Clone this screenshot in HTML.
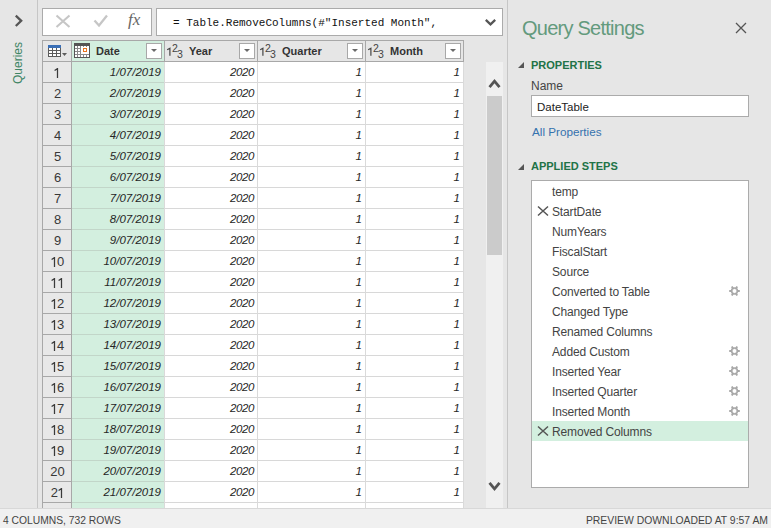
<!DOCTYPE html>
<html><head><meta charset="utf-8">
<style>
*{margin:0;padding:0;box-sizing:border-box}
html,body{width:771px;height:528px;overflow:hidden;background:#e6e6e6;font-family:"Liberation Sans",sans-serif;color:#333}
.abs{position:absolute}
#lstrip{position:absolute;left:37px;top:0;width:1px;height:508px;background:#c6c6c6}
#queries{position:absolute;left:-3px;top:55px;width:42px;height:16px;transform:rotate(-90deg);transform-origin:center;color:#3f8565;font-size:12px;line-height:16px;text-align:center}
#fbtn{position:absolute;left:42px;top:8px;width:110px;height:28px;background:#fff;border:1px solid #ababab}
#fbox{position:absolute;left:156px;top:8px;width:347px;height:28px;background:#fff;border:1px solid #ababab}
#ftext{position:absolute;left:173px;top:15px;font-family:"Liberation Mono",monospace;font-size:11px;line-height:16px;color:#111;white-space:pre}
#grid{position:absolute;left:42px;top:40px;width:422px;height:468px;overflow:hidden}
.hl{position:absolute;left:0;width:422px;height:1px;background:#d8d8d8}
.hlr{position:absolute;left:0;width:30px;height:1px;background:#a8a8a8}
.hlg{position:absolute;left:30px;width:92px;height:1px;background:#c2d6c9}
.c,.rn{position:absolute;height:21px;line-height:23px;font-size:11.5px;font-style:italic;color:#262626;text-align:right;padding-right:3px}
.rn{left:1px;width:29px;text-align:center;font-style:normal;padding:0;background:#e8e8e8;color:#383838;font-size:13px;text-indent:0}
.dt{left:30px;width:92px;background:#d3efdf}
.yr{left:123px;width:92px;letter-spacing:-0.4px}
.qt{left:216px;width:107px}
.mo{left:324px;width:97px}
.vl{position:absolute;top:0;width:1px;height:468px;background:#dadada}
#dataBg{position:absolute;left:0;top:21px;width:422px;height:447px;background:#fff}
.hdr{position:absolute;top:0;height:21px;background:#e6e6e6;font-weight:bold;font-size:11px;line-height:23px;color:#333}
.dd{position:absolute;top:3px;width:16px;height:16px;background:#fff;border:1px solid #a8a8a8}
.dd:after{content:"";position:absolute;left:4px;top:5px;border-left:3px solid transparent;border-right:3px solid transparent;border-top:3px solid #6a6a6a}
.d1,.d2,.d3{position:absolute;font-size:10.5px;font-weight:normal;color:#444;line-height:10px;-webkit-text-stroke:0}
.d1{left:2px;top:7px;font-size:10.5px}
.d2{left:7px;top:3px}
.d3{left:12px;top:9px}
#sb{position:absolute;left:486px;top:62px;width:17px;height:446px;background:#f0f0f0}
#thumb{position:absolute;left:487px;top:96px;width:15px;height:159px;background:#cbcbcb}
#rdiv{position:absolute;left:507px;top:0;width:1px;height:508px;background:#c6c6c6}
#qs{position:absolute;left:522px;top:15px;font-size:20px;line-height:26px;color:#639a7d;letter-spacing:-0.75px}
.sec{position:absolute;left:531px;font-size:11px;font-weight:bold;color:#217346;line-height:14px}
.tri{position:absolute;width:0;height:0;border-left:6px solid transparent;border-bottom:6px solid #555}
#namel{position:absolute;left:531px;top:79px;font-size:12px;line-height:14px;color:#444}
#namein{position:absolute;left:531px;top:95px;width:218px;height:22px;background:#fff;border:1px solid #ababab}
#nametxt{position:absolute;left:537px;top:100px;font-size:11.5px;line-height:14px;color:#222}
#allp{position:absolute;left:532px;top:125px;font-size:11.7px;line-height:14px;color:#3572ae}
#steps{position:absolute;left:531px;top:180px;width:218px;height:308px;background:#fff;border:1px solid #ababab}
.step{position:absolute;left:532px;width:216px;height:20px;font-size:12px;line-height:22px;color:#444;letter-spacing:-0.15px}
.step.sel{background:#d3efdf}
.sn{position:absolute;left:20px;top:0}
.sx{position:absolute;left:5px;top:4px}
.gear{position:absolute;left:196px;top:4px}
#status{position:absolute;left:0;top:508px;width:771px;height:20px;background:#f0f0f0;border-top:1px solid #d8d8d8}
#st1{position:absolute;left:3px;top:514px;font-size:10.3px;line-height:14px;color:#444}
#st2{position:absolute;right:3px;top:514px;font-size:10.4px;line-height:14px;color:#444}
</style></head><body>
<div id="lstrip"></div>
<svg class="abs" style="left:14px;top:14px" width="10" height="14" viewBox="0 0 10 14"><path d="M1.8 1.6L7.2 6.8L1.8 12" fill="none" stroke="#555" stroke-width="2.3"/></svg>
<div id="queries">Queries</div>

<div id="fbtn"></div>
<svg class="abs" style="left:55px;top:14px" width="16" height="14" viewBox="0 0 16 14"><path d="M1.5 1.5L14.5 13M14.5 1.5L1.5 13" stroke="#c6c6c6" stroke-width="2.1"/></svg>
<svg class="abs" style="left:93px;top:14px" width="16" height="14" viewBox="0 0 16 14"><path d="M1.5 6.5L6 11.5L14 1.5" fill="none" stroke="#c6c6c6" stroke-width="2.3"/></svg>
<div class="abs" style="left:128px;top:8px;font-family:'Liberation Serif',serif;font-style:italic;font-size:17px;line-height:24px;color:#666">fx</div>
<div id="fbox"></div>
<div id="ftext">= Table.RemoveColumns(#"Inserted Month",</div>
<svg class="abs" style="left:484px;top:18px" width="13" height="9" viewBox="0 0 13 9"><path d="M1.8 1.8L6.5 6.3L11.2 1.8" fill="none" stroke="#555" stroke-width="2.3"/></svg>

<div id="grid">
<div id="dataBg"></div>
<div class="hdr" style="left:1px;width:29px"></div><svg class="abs" style="left:6px;top:5px" width="20" height="12" viewBox="0 0 20 12"><rect x="0" y="0" width="13" height="12" fill="#5c5c5c"/><rect x="0" y="0" width="13" height="3" fill="#3b6fb6"/>
<g fill="#fff"><rect x="1" y="3" width="3" height="2"/><rect x="5" y="3" width="3" height="2"/><rect x="9" y="3" width="3" height="2"/><rect x="1" y="6" width="3" height="2"/><rect x="5" y="6" width="3" height="2"/><rect x="9" y="6" width="3" height="2"/><rect x="1" y="9" width="3" height="2"/><rect x="5" y="9" width="3" height="2"/><rect x="9" y="9" width="3" height="2"/></g>
<path d="M14 8H19L16.5 11Z" fill="#5c5c5c"/></svg>
<div class="hdr" style="left:30px;width:92px;background:#d3efdf"><svg class="abs" style="left:2px;top:3px" width="16" height="15" viewBox="0 0 16 15"><rect x="0" y="0" width="16" height="15" fill="#555"/><rect x="1" y="3" width="14" height="11" fill="#8a8a8a"/>
<g fill="#fff"><rect x="1" y="3" width="2" height="2"/><rect x="4" y="3" width="2" height="2"/><rect x="7" y="3" width="2" height="2"/><rect x="10" y="3" width="2" height="2"/><rect x="13" y="3" width="2" height="2"/>
<rect x="1" y="6" width="2" height="2"/><rect x="4" y="6" width="2" height="2"/><rect x="13" y="6" width="2" height="2"/>
<rect x="1" y="9" width="2" height="2"/><rect x="4" y="9" width="2" height="2"/><rect x="7" y="9" width="2" height="2"/><rect x="10" y="9" width="2" height="2"/><rect x="13" y="9" width="2" height="2"/>
<rect x="1" y="12" width="2" height="2"/><rect x="4" y="12" width="2" height="2"/><rect x="7" y="12" width="2" height="2"/><rect x="10" y="12" width="2" height="2"/><rect x="13" y="12" width="2" height="2"/>
<rect x="7" y="4" width="8" height="7"/></g><rect x="9" y="5" width="4" height="4" fill="#e8731e"/><rect x="10" y="6" width="2" height="2" fill="#fff"/></svg><span style="position:absolute;left:24px">Date</span><div class="dd" style="left:74px"></div></div>
<div class="hdr" style="left:123px;width:92px"><svg class="abs" style="left:0;top:0" width="8" height="21"><path d="M2.2 9.8L4.9 8.2V15.8" fill="none" stroke="#444" stroke-width="1.2"/></svg><span class="d2">2</span><span class="d3">3</span><span style="position:absolute;left:24px">Year</span><div class="dd" style="left:74px"></div></div>
<div class="hdr" style="left:216px;width:107px"><svg class="abs" style="left:0;top:0" width="8" height="21"><path d="M2.2 9.8L4.9 8.2V15.8" fill="none" stroke="#444" stroke-width="1.2"/></svg><span class="d2">2</span><span class="d3">3</span><span style="position:absolute;left:24px">Quarter</span><div class="dd" style="left:89px"></div></div>
<div class="hdr" style="left:324px;width:97px"><svg class="abs" style="left:0;top:0" width="8" height="21"><path d="M2.2 9.8L4.9 8.2V15.8" fill="none" stroke="#444" stroke-width="1.2"/></svg><span class="d2">2</span><span class="d3">3</span><span style="position:absolute;left:24px">Month</span><div class="dd" style="left:79px"></div></div>
<div class="rn" style="top:21px"><svg width="6.4" height="10" viewBox="0 0 6.4 10" style="vertical-align:-1px"><path d="M0.6 2.5L3.5 0.6V10" fill="none" stroke="#3a3a3a" stroke-width="1.25"/></svg></div>
<div class="c dt" style="top:21px">1/07/2019</div>
<div class="c yr" style="top:21px">2020</div>
<div class="c qt" style="top:21px">1</div>
<div class="c mo" style="top:21px">1</div>
<div class="rn" style="top:42px">2</div>
<div class="c dt" style="top:42px">2/07/2019</div>
<div class="c yr" style="top:42px">2020</div>
<div class="c qt" style="top:42px">1</div>
<div class="c mo" style="top:42px">1</div>
<div class="rn" style="top:63px">3</div>
<div class="c dt" style="top:63px">3/07/2019</div>
<div class="c yr" style="top:63px">2020</div>
<div class="c qt" style="top:63px">1</div>
<div class="c mo" style="top:63px">1</div>
<div class="rn" style="top:84px">4</div>
<div class="c dt" style="top:84px">4/07/2019</div>
<div class="c yr" style="top:84px">2020</div>
<div class="c qt" style="top:84px">1</div>
<div class="c mo" style="top:84px">1</div>
<div class="rn" style="top:105px">5</div>
<div class="c dt" style="top:105px">5/07/2019</div>
<div class="c yr" style="top:105px">2020</div>
<div class="c qt" style="top:105px">1</div>
<div class="c mo" style="top:105px">1</div>
<div class="rn" style="top:126px">6</div>
<div class="c dt" style="top:126px">6/07/2019</div>
<div class="c yr" style="top:126px">2020</div>
<div class="c qt" style="top:126px">1</div>
<div class="c mo" style="top:126px">1</div>
<div class="rn" style="top:147px">7</div>
<div class="c dt" style="top:147px">7/07/2019</div>
<div class="c yr" style="top:147px">2020</div>
<div class="c qt" style="top:147px">1</div>
<div class="c mo" style="top:147px">1</div>
<div class="rn" style="top:168px">8</div>
<div class="c dt" style="top:168px">8/07/2019</div>
<div class="c yr" style="top:168px">2020</div>
<div class="c qt" style="top:168px">1</div>
<div class="c mo" style="top:168px">1</div>
<div class="rn" style="top:189px">9</div>
<div class="c dt" style="top:189px">9/07/2019</div>
<div class="c yr" style="top:189px">2020</div>
<div class="c qt" style="top:189px">1</div>
<div class="c mo" style="top:189px">1</div>
<div class="rn" style="top:210px"><svg width="6.4" height="10" viewBox="0 0 6.4 10" style="vertical-align:-1px"><path d="M0.6 2.5L3.5 0.6V10" fill="none" stroke="#3a3a3a" stroke-width="1.25"/></svg>0</div>
<div class="c dt" style="top:210px">10/07/2019</div>
<div class="c yr" style="top:210px">2020</div>
<div class="c qt" style="top:210px">1</div>
<div class="c mo" style="top:210px">1</div>
<div class="rn" style="top:231px"><svg width="6.4" height="10" viewBox="0 0 6.4 10" style="vertical-align:-1px"><path d="M0.6 2.5L3.5 0.6V10" fill="none" stroke="#3a3a3a" stroke-width="1.25"/></svg><svg width="6.4" height="10" viewBox="0 0 6.4 10" style="vertical-align:-1px"><path d="M0.6 2.5L3.5 0.6V10" fill="none" stroke="#3a3a3a" stroke-width="1.25"/></svg></div>
<div class="c dt" style="top:231px">11/07/2019</div>
<div class="c yr" style="top:231px">2020</div>
<div class="c qt" style="top:231px">1</div>
<div class="c mo" style="top:231px">1</div>
<div class="rn" style="top:252px"><svg width="6.4" height="10" viewBox="0 0 6.4 10" style="vertical-align:-1px"><path d="M0.6 2.5L3.5 0.6V10" fill="none" stroke="#3a3a3a" stroke-width="1.25"/></svg>2</div>
<div class="c dt" style="top:252px">12/07/2019</div>
<div class="c yr" style="top:252px">2020</div>
<div class="c qt" style="top:252px">1</div>
<div class="c mo" style="top:252px">1</div>
<div class="rn" style="top:273px"><svg width="6.4" height="10" viewBox="0 0 6.4 10" style="vertical-align:-1px"><path d="M0.6 2.5L3.5 0.6V10" fill="none" stroke="#3a3a3a" stroke-width="1.25"/></svg>3</div>
<div class="c dt" style="top:273px">13/07/2019</div>
<div class="c yr" style="top:273px">2020</div>
<div class="c qt" style="top:273px">1</div>
<div class="c mo" style="top:273px">1</div>
<div class="rn" style="top:294px"><svg width="6.4" height="10" viewBox="0 0 6.4 10" style="vertical-align:-1px"><path d="M0.6 2.5L3.5 0.6V10" fill="none" stroke="#3a3a3a" stroke-width="1.25"/></svg>4</div>
<div class="c dt" style="top:294px">14/07/2019</div>
<div class="c yr" style="top:294px">2020</div>
<div class="c qt" style="top:294px">1</div>
<div class="c mo" style="top:294px">1</div>
<div class="rn" style="top:315px"><svg width="6.4" height="10" viewBox="0 0 6.4 10" style="vertical-align:-1px"><path d="M0.6 2.5L3.5 0.6V10" fill="none" stroke="#3a3a3a" stroke-width="1.25"/></svg>5</div>
<div class="c dt" style="top:315px">15/07/2019</div>
<div class="c yr" style="top:315px">2020</div>
<div class="c qt" style="top:315px">1</div>
<div class="c mo" style="top:315px">1</div>
<div class="rn" style="top:336px"><svg width="6.4" height="10" viewBox="0 0 6.4 10" style="vertical-align:-1px"><path d="M0.6 2.5L3.5 0.6V10" fill="none" stroke="#3a3a3a" stroke-width="1.25"/></svg>6</div>
<div class="c dt" style="top:336px">16/07/2019</div>
<div class="c yr" style="top:336px">2020</div>
<div class="c qt" style="top:336px">1</div>
<div class="c mo" style="top:336px">1</div>
<div class="rn" style="top:357px"><svg width="6.4" height="10" viewBox="0 0 6.4 10" style="vertical-align:-1px"><path d="M0.6 2.5L3.5 0.6V10" fill="none" stroke="#3a3a3a" stroke-width="1.25"/></svg>7</div>
<div class="c dt" style="top:357px">17/07/2019</div>
<div class="c yr" style="top:357px">2020</div>
<div class="c qt" style="top:357px">1</div>
<div class="c mo" style="top:357px">1</div>
<div class="rn" style="top:378px"><svg width="6.4" height="10" viewBox="0 0 6.4 10" style="vertical-align:-1px"><path d="M0.6 2.5L3.5 0.6V10" fill="none" stroke="#3a3a3a" stroke-width="1.25"/></svg>8</div>
<div class="c dt" style="top:378px">18/07/2019</div>
<div class="c yr" style="top:378px">2020</div>
<div class="c qt" style="top:378px">1</div>
<div class="c mo" style="top:378px">1</div>
<div class="rn" style="top:399px"><svg width="6.4" height="10" viewBox="0 0 6.4 10" style="vertical-align:-1px"><path d="M0.6 2.5L3.5 0.6V10" fill="none" stroke="#3a3a3a" stroke-width="1.25"/></svg>9</div>
<div class="c dt" style="top:399px">19/07/2019</div>
<div class="c yr" style="top:399px">2020</div>
<div class="c qt" style="top:399px">1</div>
<div class="c mo" style="top:399px">1</div>
<div class="rn" style="top:420px">20</div>
<div class="c dt" style="top:420px">20/07/2019</div>
<div class="c yr" style="top:420px">2020</div>
<div class="c qt" style="top:420px">1</div>
<div class="c mo" style="top:420px">1</div>
<div class="rn" style="top:441px">2<svg width="6.4" height="10" viewBox="0 0 6.4 10" style="vertical-align:-1px"><path d="M0.6 2.5L3.5 0.6V10" fill="none" stroke="#3a3a3a" stroke-width="1.25"/></svg></div>
<div class="c dt" style="top:441px">21/07/2019</div>
<div class="c yr" style="top:441px">2020</div>
<div class="c qt" style="top:441px">1</div>
<div class="c mo" style="top:441px">1</div>
<div class="rn" style="top:462px">22</div>
<div class="c dt" style="top:462px">22/07/2019</div>
<div class="c yr" style="top:462px">2020</div>
<div class="c qt" style="top:462px">1</div>
<div class="c mo" style="top:462px">1</div>
<div class="hl" style="top:0px"></div><div class="hlr" style="top:0px"></div><div class="hlg" style="top:0px"></div>
<div class="hl" style="top:21px"></div><div class="hlr" style="top:21px"></div><div class="hlg" style="top:21px"></div>
<div class="hl" style="top:42px"></div><div class="hlr" style="top:42px"></div><div class="hlg" style="top:42px"></div>
<div class="hl" style="top:63px"></div><div class="hlr" style="top:63px"></div><div class="hlg" style="top:63px"></div>
<div class="hl" style="top:84px"></div><div class="hlr" style="top:84px"></div><div class="hlg" style="top:84px"></div>
<div class="hl" style="top:105px"></div><div class="hlr" style="top:105px"></div><div class="hlg" style="top:105px"></div>
<div class="hl" style="top:126px"></div><div class="hlr" style="top:126px"></div><div class="hlg" style="top:126px"></div>
<div class="hl" style="top:147px"></div><div class="hlr" style="top:147px"></div><div class="hlg" style="top:147px"></div>
<div class="hl" style="top:168px"></div><div class="hlr" style="top:168px"></div><div class="hlg" style="top:168px"></div>
<div class="hl" style="top:189px"></div><div class="hlr" style="top:189px"></div><div class="hlg" style="top:189px"></div>
<div class="hl" style="top:210px"></div><div class="hlr" style="top:210px"></div><div class="hlg" style="top:210px"></div>
<div class="hl" style="top:231px"></div><div class="hlr" style="top:231px"></div><div class="hlg" style="top:231px"></div>
<div class="hl" style="top:252px"></div><div class="hlr" style="top:252px"></div><div class="hlg" style="top:252px"></div>
<div class="hl" style="top:273px"></div><div class="hlr" style="top:273px"></div><div class="hlg" style="top:273px"></div>
<div class="hl" style="top:294px"></div><div class="hlr" style="top:294px"></div><div class="hlg" style="top:294px"></div>
<div class="hl" style="top:315px"></div><div class="hlr" style="top:315px"></div><div class="hlg" style="top:315px"></div>
<div class="hl" style="top:336px"></div><div class="hlr" style="top:336px"></div><div class="hlg" style="top:336px"></div>
<div class="hl" style="top:357px"></div><div class="hlr" style="top:357px"></div><div class="hlg" style="top:357px"></div>
<div class="hl" style="top:378px"></div><div class="hlr" style="top:378px"></div><div class="hlg" style="top:378px"></div>
<div class="hl" style="top:399px"></div><div class="hlr" style="top:399px"></div><div class="hlg" style="top:399px"></div>
<div class="hl" style="top:420px"></div><div class="hlr" style="top:420px"></div><div class="hlg" style="top:420px"></div>
<div class="hl" style="top:441px"></div><div class="hlr" style="top:441px"></div><div class="hlg" style="top:441px"></div>
<div class="hl" style="top:462px"></div><div class="hlr" style="top:462px"></div><div class="hlg" style="top:462px"></div>
<div class="vl" style="left:122px"></div>
<div class="vl" style="left:215px"></div>
<div class="vl" style="left:323px"></div>
<div class="vl" style="left:421px"></div>
<div class="vl" style="left:0;background:#a8a8a8"></div>
<div class="vl" style="left:29px;background:#a8a8a8"></div>
<div class="abs" style="left:0;top:0;width:422px;height:22px;border-top:1px solid #a8a8a8;border-bottom:1px solid #a8a8a8"></div>
<div class="abs" style="left:122px;top:0;width:1px;height:22px;background:#a8a8a8"></div>
<div class="abs" style="left:215px;top:0;width:1px;height:22px;background:#a8a8a8"></div>
<div class="abs" style="left:323px;top:0;width:1px;height:22px;background:#a8a8a8"></div>
<div class="abs" style="left:421px;top:0;width:1px;height:22px;background:#a8a8a8"></div>
</div>

<div id="sb"></div>
<div id="thumb"></div>
<svg class="abs" style="left:488px;top:78px" width="13" height="11" viewBox="0 0 13 11"><path d="M1.5 9.2L6.5 3.2L11.5 9.2" fill="none" stroke="#555" stroke-width="2.8"/></svg>
<svg class="abs" style="left:488px;top:481px" width="13" height="11" viewBox="0 0 13 11"><path d="M1.5 1.8L6.5 7.8L11.5 1.8" fill="none" stroke="#555" stroke-width="2.8"/></svg>
<div id="rdiv"></div>

<div id="qs">Query Settings</div>
<svg class="abs" style="left:735px;top:22px" width="12" height="12" viewBox="0 0 12 12"><path d="M1 1L11 11M11 1L1 11" stroke="#555" stroke-width="1.3"/></svg>
<div class="tri" style="left:518px;top:62px"></div>
<div class="sec" style="top:58px">PROPERTIES</div>
<div id="namel">Name</div>
<div id="namein"></div>
<div id="nametxt">DateTable</div>
<div id="allp">All Properties</div>
<div class="tri" style="left:518px;top:164px"></div>
<div class="sec" style="top:159px">APPLIED STEPS</div>
<div id="steps"></div>
<div class="step" style="top:181px"><span class="sn">temp</span></div>
<div class="step" style="top:201px"><span class="sn">StartDate</span><svg class="sx" width="12" height="12" viewBox="0 0 12 12"><path d="M1 1.5L11 10.5M11 1.5L1 10.5" stroke="#555" stroke-width="1.5"/></svg></div>
<div class="step" style="top:221px"><span class="sn">NumYears</span></div>
<div class="step" style="top:241px"><span class="sn">FiscalStart</span></div>
<div class="step" style="top:261px"><span class="sn">Source</span></div>
<div class="step" style="top:281px"><span class="sn">Converted to Table</span><svg class="gear" width="13" height="12" viewBox="0 0 13 12"><g stroke="#a8a8a8" stroke-width="1.9"><path d="M1.2 6H11.8M3.8 1.5L9.2 10.5M9.2 1.5L3.8 10.5"/></g><circle cx="6.5" cy="6" r="2.9" fill="none" stroke="#a8a8a8" stroke-width="1.5"/><circle cx="6.5" cy="6" r="2" fill="#fff"/></svg></div>
<div class="step" style="top:301px"><span class="sn">Changed Type</span></div>
<div class="step" style="top:321px"><span class="sn">Renamed Columns</span></div>
<div class="step" style="top:341px"><span class="sn">Added Custom</span><svg class="gear" width="13" height="12" viewBox="0 0 13 12"><g stroke="#a8a8a8" stroke-width="1.9"><path d="M1.2 6H11.8M3.8 1.5L9.2 10.5M9.2 1.5L3.8 10.5"/></g><circle cx="6.5" cy="6" r="2.9" fill="none" stroke="#a8a8a8" stroke-width="1.5"/><circle cx="6.5" cy="6" r="2" fill="#fff"/></svg></div>
<div class="step" style="top:361px"><span class="sn">Inserted Year</span><svg class="gear" width="13" height="12" viewBox="0 0 13 12"><g stroke="#a8a8a8" stroke-width="1.9"><path d="M1.2 6H11.8M3.8 1.5L9.2 10.5M9.2 1.5L3.8 10.5"/></g><circle cx="6.5" cy="6" r="2.9" fill="none" stroke="#a8a8a8" stroke-width="1.5"/><circle cx="6.5" cy="6" r="2" fill="#fff"/></svg></div>
<div class="step" style="top:381px"><span class="sn">Inserted Quarter</span><svg class="gear" width="13" height="12" viewBox="0 0 13 12"><g stroke="#a8a8a8" stroke-width="1.9"><path d="M1.2 6H11.8M3.8 1.5L9.2 10.5M9.2 1.5L3.8 10.5"/></g><circle cx="6.5" cy="6" r="2.9" fill="none" stroke="#a8a8a8" stroke-width="1.5"/><circle cx="6.5" cy="6" r="2" fill="#fff"/></svg></div>
<div class="step" style="top:401px"><span class="sn">Inserted Month</span><svg class="gear" width="13" height="12" viewBox="0 0 13 12"><g stroke="#a8a8a8" stroke-width="1.9"><path d="M1.2 6H11.8M3.8 1.5L9.2 10.5M9.2 1.5L3.8 10.5"/></g><circle cx="6.5" cy="6" r="2.9" fill="none" stroke="#a8a8a8" stroke-width="1.5"/><circle cx="6.5" cy="6" r="2" fill="#fff"/></svg></div>
<div class="step sel" style="top:421px"><span class="sn">Removed Columns</span><svg class="sx" width="12" height="12" viewBox="0 0 12 12"><path d="M1 1.5L11 10.5M11 1.5L1 10.5" stroke="#555" stroke-width="1.5"/></svg></div>

<div id="status"></div>
<div id="st1">4 COLUMNS, 732 ROWS</div>
<div id="st2">PREVIEW DOWNLOADED AT 9:57 AM</div>
</body></html>
